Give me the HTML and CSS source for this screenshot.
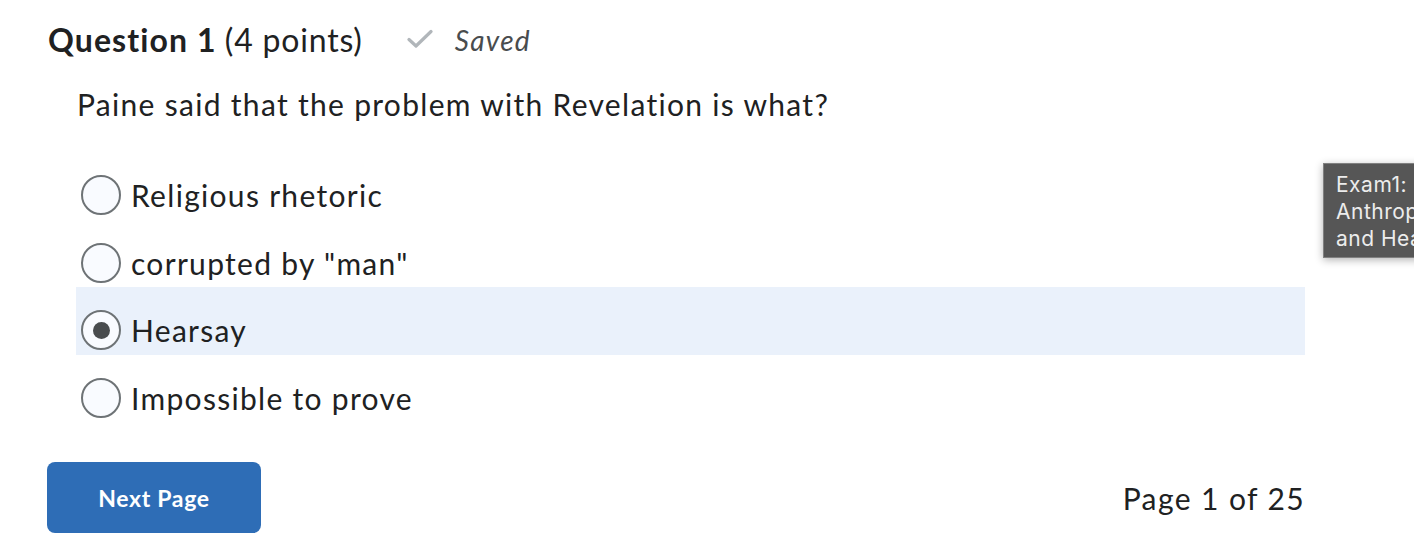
FILE: index.html
```html
<!DOCTYPE html>
<html>
<head>
<meta charset="utf-8">
<link rel="stylesheet" href="styles.css">
</head>
<body>
<div class="page">
  <div class="q-head">
    <h2 class="q-title"><strong>Question 1</strong> <span class="pts">(4 points)</span></h2>
    <span class="saved">
      <svg class="check" width="26" height="20" viewBox="0 0 26 20"><path d="M2 10.5 L9 17 L24 2.5" fill="none" stroke="#b1b6ba" stroke-width="3.2" stroke-linecap="round" stroke-linejoin="round"/></svg>
      <em>Saved</em>
    </span>
  </div>
  <p class="q-text">Paine said that the problem with Revelation is what?</p>
  <div class="options">
    <label class="opt"><span class="radio"></span><span class="opt-label">Religious rhetoric</span></label>
    <label class="opt"><span class="radio"></span><span class="opt-label">corrupted by "man"</span></label>
    <label class="opt selected"><span class="radio checked"></span><span class="opt-label">Hearsay</span></label>
    <label class="opt"><span class="radio"></span><span class="opt-label">Impossible to prove</span></label>
  </div>
  <div class="footer">
    <button class="next">Next Page</button>
    <span class="pager">Page 1 of 25</span>
  </div>
</div>
<div class="tooltip">Exam1:<br>Anthropology<br>and Health</div>
</body>
</html>
```
FILE: styles.css
```css
html, body {
  margin: 0;
  padding: 0;
  background: #ffffff;
  overflow: hidden;
}
body {
  font-family: Lato, "Noto Sans", sans-serif;
  font-variant-ligatures: none;
  color: #202122;
  width: 1414px;
  height: 556px;
  position: relative;
}
.page {
  padding: 20px 0 0 48px;
  width: 1257px;
}
.q-head {
  display: flex;
  align-items: center;
  height: 40px;
}
.q-title {
  margin: 0;
  font-size: 32px;
  font-weight: 400;
  line-height: 40px;
  color: #202122;
}
.q-title strong {
  font-weight: 700;
  letter-spacing: 1.1px;
}
.q-title .pts {
  letter-spacing: 0.8px;
}
.saved {
  display: flex;
  align-items: center;
  margin-left: 44px;
  color: #494c4e;
  font-size: 28px;
}
.check {
  margin-right: 22px;
  margin-top: -2px;
}
.saved em {
  font-style: italic;
  letter-spacing: 1.3px;
}
.q-text {
  margin: 24px 0 0 29px;
  font-size: 30px;
  line-height: 40px;
  letter-spacing: 1.3px;
}
.options {
  margin: 28px 0 0 28px;
  width: 1229px;
}
.opt {
  display: flex;
  align-items: center;
  height: 40px;
  padding: 23px 0 4.5px 5px;
}
.opt.selected {
  background: #eaf1fb;
}
.radio {
  box-sizing: border-box;
  width: 40px;
  height: 40px;
  border: 2px solid #6e7376;
  border-radius: 50%;
  background: #f9fbff;
  flex: none;
  display: flex;
  align-items: center;
  justify-content: center;
}
.radio.checked::after {
  content: "";
  width: 17px;
  height: 17px;
  border-radius: 50%;
  background: #494c4e;
}
.opt-label {
  margin-left: 10px;
  font-size: 30px;
  line-height: 40px;
  letter-spacing: 1.3px;
}
.footer {
  display: flex;
  align-items: center;
  justify-content: space-between;
  margin: 40px 0 0 -1px;
}
.next {
  width: 214px;
  height: 71px;
  border: none;
  border-radius: 8px;
  background: #2e6db6;
  color: #ffffff;
  font-family: Lato, sans-serif;
  font-variant-ligatures: none;
  font-weight: 700;
  font-size: 23px;
  letter-spacing: 0.7px;
}
.pager {
  font-size: 30px;
  line-height: 40px;
  margin-top: 1px;
  letter-spacing: 1.4px;
}
.tooltip {
  position: absolute;
  left: 1323px;
  top: 163px;
  width: 140px;
  height: 95px;
  box-sizing: border-box;
  padding: 7px 12px;
  background: #565656;
  border: 1px solid #808080;
  box-shadow: 0 2px 8px rgba(0,0,0,0.3);
  color: #ececec;
  font-family: Inter, "Liberation Sans", sans-serif;
  font-size: 21px;
  line-height: 27px;
  letter-spacing: 0.5px;
  white-space: nowrap;
  overflow: hidden;
}
```
